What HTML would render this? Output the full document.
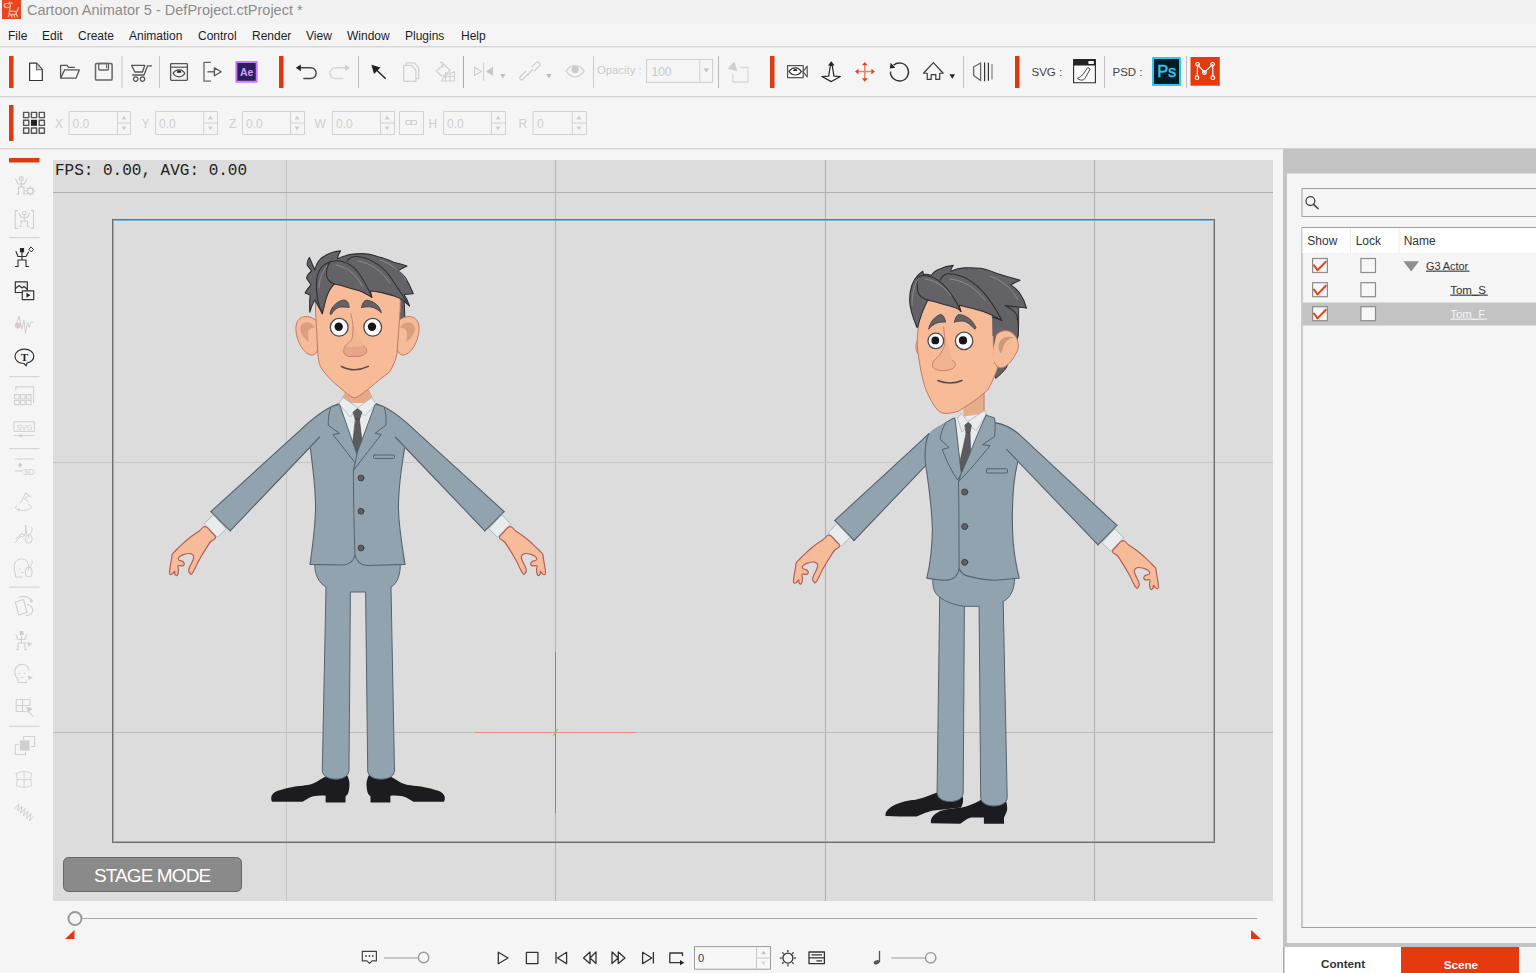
<!DOCTYPE html>
<html><head><meta charset="utf-8">
<style>
html,body{margin:0;padding:0}
body{width:1536px;height:973px;overflow:hidden;background:#f5f5f5;position:relative;font-family:"Liberation Sans",sans-serif}
.a{position:absolute;white-space:pre;line-height:1}
svg{position:absolute;left:0;top:0}
</style></head><body>
<div class="a" style="left:0;top:0;width:1536px;height:24px;background:#f2f2f2"></div>
<svg width="1536" height="973" viewBox="0 0 1536 973">
<!-- separators -->
<rect x="0" y="46" width="1536" height="1" fill="#d4d4d4"/>
<rect x="0" y="47" width="1536" height="1" fill="#e8e8e8"/>
<rect x="0" y="96" width="1536" height="1" fill="#d4d4d4"/>
<rect x="0" y="97" width="1536" height="1" fill="#e8e8e8"/>
<rect x="0" y="148" width="1536" height="1" fill="#d4d4d4"/>
<rect x="0" y="149" width="1536" height="1" fill="#e8e8e8"/>
<!-- logo -->
<rect x="2" y="0" width="19" height="19" fill="#e8461e"/>
<!-- red bars toolbar -->
<rect x="9" y="56" width="4.5" height="32" fill="#dd3a12"/>
<rect x="279" y="56" width="4.5" height="32" fill="#dd3a12"/>
<rect x="770" y="56" width="4.5" height="32" fill="#dd3a12"/>
<rect x="1015" y="56" width="4.5" height="32" fill="#dd3a12"/>
<rect x="9" y="105" width="4.5" height="36" fill="#dd3a12"/>
<rect x="9" y="158" width="30.5" height="4.5" fill="#dd3a12"/>
<!-- canvas -->
<rect x="53" y="160" width="1220" height="741" fill="#dcdcdc"/>
<g>
<rect x="286" y="160" width="1" height="741" fill="#c7c7c7"/>
<rect x="555" y="160" width="1" height="741" fill="#b3b3b3"/>
<rect x="825" y="160" width="1" height="741" fill="#afafaf"/>
<rect x="1094" y="160" width="1" height="741" fill="#afafaf"/>
<rect x="53" y="192" width="1220" height="1" fill="#afafaf"/>
<rect x="53" y="462" width="1220" height="1" fill="#c6c6c6"/>
<rect x="53" y="732" width="1220" height="1" fill="#bcbcbc"/>
</g>
<rect x="112.5" y="219.5" width="1102" height="623" fill="none" stroke="#6e6e6e" stroke-width="1"/>
<rect x="113.5" y="220.5" width="1100" height="621" fill="none" stroke="#7ab6e6" stroke-width="1"/>
<!-- axis -->
<rect x="475" y="732" width="161" height="1" fill="#e88a86"/>
<rect x="555" y="652" width="1" height="161" fill="#7a7ae8"/>
<path d="M553.2,736 L557.8,729.2" stroke="#66e066" stroke-width="1.2"/>
<g id="icons" stroke-linejoin="round">
<!-- logo cat -->
<g fill="none" stroke="#f6b4a2" stroke-width="1.3" stroke-linecap="round">
<ellipse cx="7.3" cy="5.4" rx="3.2" ry="2.1"/>
<path d="M9.3,3.3 L9.3,1.8 M9.5,3.2 L12.3,3.2"/>
<path d="M10,7.3 L9.6,11.5"/>
<ellipse cx="12.8" cy="12.9" rx="3.7" ry="1.8"/>
<path d="M16.3,12 C17.8,10 18.6,9 18.5,7.6"/>
<path d="M9.3,14.3 L8.3,16.6 M11.3,14.6 L11.6,17 M14,14.6 L14.5,17 M16.3,14 L17.3,16.6"/>
</g>
<!-- new doc -->
<path d="M29.6,63.2 L36.7,63.2 L42.3,69.5 L42.3,80.5 L29.6,80.5 Z" fill="#fff" stroke="#333" stroke-width="1.2"/>
<path d="M36.5,63.5 L36.5,69.8 L42,69.8" fill="#ccc" stroke="#666" stroke-width="1.1"/>
<!-- folder -->
<path d="M60.6,78 L60.6,65.3 L67.2,65.3 L68.6,67.3 L74.8,67.3" fill="none" stroke="#555" stroke-width="1.3"/>
<path d="M60.6,78.2 L64.6,69.9 L79.3,69.9 L76,78.2 Z" fill="none" stroke="#555" stroke-width="1.3"/>
<!-- save -->
<rect x="95.5" y="63.5" width="16.6" height="16.6" rx="1.2" fill="none" stroke="#666" stroke-width="1.5"/>
<rect x="98.7" y="63.5" width="9.8" height="6.5" rx="0.8" fill="none" stroke="#666" stroke-width="1.3"/>
<path d="M106.6,64.8 L106.6,68.2" stroke="#666" stroke-width="1.2"/>
<rect x="121.5" y="56" width="1" height="32" fill="#c8c8c8"/>
<!-- cart -->
<path d="M131.6,65.3 L144.8,65.3 L142.5,72 L134.8,72 Z" fill="none" stroke="#555" stroke-width="1.3"/>
<path d="M132.2,75 L144,75 L147.5,65.9 L152,65.9" fill="none" stroke="#555" stroke-width="1.3"/>
<circle cx="135.7" cy="79.1" r="2.2" fill="none" stroke="#555" stroke-width="1.2"/>
<circle cx="142.5" cy="79.1" r="2.2" fill="none" stroke="#555" stroke-width="1.2"/>
<rect x="159" y="56" width="1" height="32" fill="#c8c8c8"/>
<!-- eye window -->
<rect x="170.6" y="63.6" width="16.8" height="16.8" rx="0.8" fill="none" stroke="#555" stroke-width="1.3"/>
<path d="M170.6,67.2 L187.4,67.2" stroke="#555" stroke-width="1.2"/>
<path d="M173.2,73.3 C175,70 177,69.8 179,69.8 C181,69.8 183,70 184.8,73.3 C183,76.5 181,76.8 179,76.8 C177,76.8 175,76.5 173.2,73.3 Z" fill="none" stroke="#444" stroke-width="1.3"/>
<path d="M176.8,72.8 A2.3,2.3 0 0 1 181.4,72.8 Z" fill="#222"/>
<!-- export -->
<path d="M211,62.4 L204,62.4 L204,81.2 L211,81.2" fill="none" stroke="#666" stroke-width="1.3"/>
<path d="M207.4,71.8 L214.2,71.8" stroke="#555" stroke-width="1.3"/>
<path d="M214.4,67.9 L221.2,71.8 L214.4,75.8 Z" fill="none" stroke="#555" stroke-width="1.3"/>
<!-- Ae -->
<rect x="236.3" y="62" width="20.4" height="19.8" fill="#2a1f5a" stroke="#c87cf8" stroke-width="2"/>
<text x="246.6" y="76.3" text-anchor="middle" font-family="Liberation Sans" font-weight="bold" font-size="10.5" fill="#d79cff">Ae</text>
<!-- undo -->
<path d="M300.4,67.8 L310.8,67.8 A5.35,5.35 0 0 1 310.8,78.5 L303.3,78.5" fill="none" stroke="#444" stroke-width="1.4"/>
<path d="M295.9,67.8 L300.8,64.4 L300.8,71.2 Z" fill="#222"/>
<!-- redo -->
<path d="M345.6,67.8 L335.4,67.8 A5.35,5.35 0 0 0 335.4,78.5 L343.4,78.5" fill="none" stroke="#d6d6d6" stroke-width="1.4"/>
<path d="M349.8,67.8 L345.2,64.4 L345.2,71.2 Z" fill="#d0d0d0"/>
<rect x="358" y="56" width="1" height="32" fill="#c0c0c0"/>
<!-- arrow cursor -->
<path d="M371.4,64.8 L380.5,67.4 L374,74 Z" fill="#222"/>
<path d="M376,69.5 L385.7,78.8" stroke="#222" stroke-width="1.4"/>
<!-- copy (light) -->
<path d="M406.2,65 L406.2,62.8 L414.5,62.8 L418.7,68 L418.7,78.7 L416,78.7" fill="none" stroke="#d2d2d2" stroke-width="1.3"/>
<path d="M403.6,65.3 L411.8,65.3 L415.9,70.5 L415.9,81.3 L403.6,81.3 Z" fill="none" stroke="#d2d2d2" stroke-width="1.3"/>
<!-- paint bucket (light) -->
<path d="M440,63 C441.5,61.8 442.8,62.3 442.8,64 L442.6,68" fill="none" stroke="#d2d2d2" stroke-width="1.2"/>
<path d="M438.5,69.5 L443.5,64 L450,70.3 L444.5,75.7 C443,76.5 441.5,76 440.5,75 L436.7,71 C436,70.5 436.5,70 438.5,69.5 Z" fill="none" stroke="#d2d2d2" stroke-width="1.2"/>
<path d="M441.2,81 L446,75 L454.5,71.8 L454.5,81 Z" fill="none" stroke="#d2d2d2" stroke-width="1.2"/>
<path d="M445.5,76.5 L454.5,76.5 M450,72 L450,81 M445.5,72 L445.5,81" stroke="#d2d2d2" stroke-width="1"/>
<rect x="463" y="56" width="1" height="32" fill="#aaaaaa"/>
<!-- flip -->
<path d="M474.6,67.3 L481.4,71.4 L474.6,75.5 Z" fill="none" stroke="#d0d0d0" stroke-width="1.2"/>
<rect x="483.1" y="62.2" width="1" height="18.6" fill="#cfcfcf"/>
<path d="M493,66.8 L485.9,71.4 L493,75.9 Z" fill="#c8c8c8"/>
<path d="M500.2,74 L505.4,74 L502.8,78.5 Z" fill="#bdbdbd"/>
<!-- link -->
<g fill="none" stroke="#d0d0d0" stroke-width="1.3">
<path d="M528.5,73.7 L523,79.2 C522,80.2 521,80.2 520.2,79.4 L520.5,79.4 C519.5,78.5 519.5,77.5 520.5,76.5 L526.2,70.8"/>
<path d="M531.4,67.3 L536.3,62.4 C537,61.7 538,61.7 538.6,62.3 L539.6,63.3 C540.2,64 540.2,65 539.5,65.7 L534,71.2"/>
<path d="M526.8,75.5 L532.8,69.5"/>
</g>
<path d="M546.4,74 L551.6,74 L549,78.5 Z" fill="#bdbdbd"/>
<!-- eye light -->
<path d="M566.2,71.2 C569,66.5 572,65.6 575.1,65.6 C578.2,65.6 581.2,66.5 584,71.2 C581.2,75.9 578.2,76.8 575.1,76.8 C572,76.8 569,75.9 566.2,71.2 Z" fill="none" stroke="#d2d2d2" stroke-width="1.3"/>
<circle cx="575.1" cy="69.6" r="3.6" fill="#cacaca"/>
<rect x="593" y="56" width="1" height="32" fill="#cccccc"/>
<!-- opacity combo -->
<rect x="646.6" y="59.5" width="66" height="22.8" fill="none" stroke="#cdcdcd" stroke-width="1"/>
<rect x="699.3" y="59.5" width="1" height="22.8" fill="#d0d0d0"/>
<path d="M703.5,68.5 L709,68.5 L706.25,72.5 Z" fill="#c4c4c4"/>
<rect x="718" y="56" width="1" height="32" fill="#b8b8b8"/>
<!-- light icon -->
<path d="M734.3,61.5 L727.5,68.7 L737.3,71.3 Z" fill="#cfcfcf"/>
<path d="M740.5,67.5 L748,67.5 L748,82 L732.8,82 L732.8,74.5" fill="none" stroke="#d8d8d8" stroke-width="1.3"/>
<!-- camera eye -->
<rect x="787.6" y="65.6" width="15.6" height="12" fill="#fff" stroke="#555" stroke-width="1.3"/>
<path d="M803,71.6 L807.2,66.2 L807.2,77 Z" fill="none" stroke="#555" stroke-width="1.2"/>
<path d="M789,71.4 C791,68.5 793,67.8 795.2,67.8 C797.4,67.8 799.4,68.5 801.4,71.4 C799.4,74.3 797.4,75 795.2,75 C793,75 791,74.3 789,71.4 Z" fill="none" stroke="#333" stroke-width="1.2"/>
<path d="M793.1,71 A2.1,2.1 0 0 1 797.3,71 Z" fill="#222"/>
<!-- up arrow -->
<path d="M831.3,61.2 L834.6,65.5 L828,65.5 Z" fill="#222"/>
<path d="M830.4,65.5 L828.7,76.2 L821.9,76.5 L831.3,81.6 L840.4,76.5 L833.9,76.2 L832.2,65.5 Z" fill="#fff" stroke="#222" stroke-width="1.2"/>
<!-- move cross -->
<g stroke="#e8836f" stroke-width="1.5"><path d="M864.8,64 L864.8,79.5 M857.5,71.6 L872.5,71.6"/></g>
<g fill="#e04428">
<path d="M864.8,61.9 L867.6,65.3 L862,65.3 Z"/><path d="M864.8,81.7 L867.6,78.3 L862,78.3 Z"/>
<path d="M855,71.6 L858.5,68.8 L858.5,74.4 Z"/><path d="M874.9,71.6 L871.4,68.8 L871.4,74.4 Z"/>
</g>
<!-- rotate -->
<path d="M890.5,71.5 A9,9 0 1 0 893.5,65.3" fill="none" stroke="#333" stroke-width="1.4"/>
<path d="M889.9,68.4 L890.6,62.8 L895.3,67.8 Z" fill="#222"/>
<!-- house -->
<path d="M923.5,73.25 L933.4,62.7 L943.2,73.25 L939.7,73.25 L939.7,79.4 L935.8,79.4 L935.8,74.7 L931.2,74.7 L931.2,79.4 L927.2,79.4 L927.2,73.25 Z" fill="none" stroke="#3a3a3a" stroke-width="1.2"/>
<path d="M949.5,74.2 L955,74.2 L952.25,78.8 Z" fill="#222"/>
<rect x="963" y="56" width="1" height="32" fill="#c0c0c0"/>
<!-- lines icon -->
<path d="M980.6,63 L973.6,67 L973.6,75.5 L980.6,80.5 Z" fill="none" stroke="#666" stroke-width="1.3"/>
<path d="M984.6,62.5 L984.6,81.2 M988.4,62.8 L988.4,80.8" stroke="#333" stroke-width="1.2"/>
<path d="M992,64 L992,79.5" stroke="#888" stroke-width="1.3"/>
<!-- svg icon -->
<rect x="1073.6" y="59.6" width="21.8" height="23.2" fill="#fbfbfb" stroke="#2a2a2a" stroke-width="1.1"/>
<rect x="1073.6" y="59.6" width="21.8" height="5.9" fill="#232323"/>
<rect x="1088.3" y="61" width="5.6" height="3.1" rx="0.8" fill="#f4f4f4"/>
<path d="M1087.8,67.5 L1090.2,69 L1085.5,77.5 C1085,79.5 1082.5,80.5 1080.5,80 L1077.2,78.5 C1079.5,77.5 1081.5,76 1083,74.5 Z" fill="none" stroke="#333" stroke-width="0.9"/>
<rect x="1104" y="56" width="1" height="32" fill="#c0c0c0"/>
<!-- PS -->
<rect x="1153" y="58" width="27" height="27" fill="#001d26" stroke="#31c5f4" stroke-width="2"/>
<text x="1166.6" y="77" text-anchor="middle" font-family="Liberation Sans" font-size="16.5" fill="#31c5f4" stroke="#31c5f4" stroke-width="0.45" letter-spacing="-0.3">Ps</text>
<rect x="1186" y="56" width="1" height="32" fill="#c0c0c0"/>
<!-- M -->
<rect x="1190.5" y="57" width="29.25" height="28.7" fill="#e5390e"/>
<g fill="none" stroke="#fff" stroke-width="1.2">
<path d="M1197.2,76.2 L1197.6,65.8 M1197.6,64.3 L1204.45,72.5 L1212.6,64.3 M1212.7,65.8 L1212.9,76.2"/>
<circle cx="1197.6" cy="64.3" r="1.8"/><circle cx="1212.6" cy="64.3" r="1.8"/><circle cx="1204.45" cy="72.5" r="1.8"/>
<circle cx="1197" cy="77.7" r="1.8"/><circle cx="1212.9" cy="77.7" r="1.8"/>
</g>
<!-- toolbar 2: grid icon -->
<g fill="none" stroke="#555" stroke-width="1.4">
<rect x="23.6" y="112.4" width="5.2" height="5.2"/><rect x="31.4" y="112.4" width="5.2" height="5.2"/><rect x="39.2" y="112.4" width="5.2" height="5.2"/>
<rect x="23.6" y="120.2" width="5.2" height="5.2"/><rect x="39.2" y="120.2" width="5.2" height="5.2"/>
<rect x="23.6" y="128" width="5.2" height="5.2"/><rect x="31.4" y="128" width="5.2" height="5.2"/><rect x="39.2" y="128" width="5.2" height="5.2"/>
</g>
<rect x="31" y="119.8" width="6" height="6" fill="#222"/>
<!-- spin boxes -->
<g fill="none" stroke="#d2d2d2" stroke-width="1">
<rect x="69" y="111.5" width="61.5" height="23"/><path d="M117.5,111.5 L117.5,134.5 M117.5,123 L130.5,123"/>
<rect x="155.5" y="111.5" width="62" height="23"/><path d="M203.8,111.5 L203.8,134.5 M203.8,123 L217.5,123"/>
<rect x="242.5" y="111.5" width="62" height="23"/><path d="M290.5,111.5 L290.5,134.5 M290.5,123 L304.5,123"/>
<rect x="332.5" y="111.5" width="62" height="23"/><path d="M380.5,111.5 L380.5,134.5 M380.5,123 L394.5,123"/>
<rect x="399.5" y="111.5" width="24" height="23"/>
<rect x="443.5" y="111.5" width="62" height="23"/><path d="M491.5,111.5 L491.5,134.5 M491.5,123 L505.5,123"/>
<rect x="533" y="111.5" width="53.5" height="23"/><path d="M572.3,111.5 L572.3,134.5 M572.3,123 L586.5,123"/>
</g>
<g fill="#cfcfcf">
<path d="M121.6,119.5 L126.4,119.5 L124,115.6 Z M121.6,126.5 L126.4,126.5 L124,130.4 Z"/>
<path d="M208,119.5 L212.8,119.5 L210.4,115.6 Z M208,126.5 L212.8,126.5 L210.4,130.4 Z"/>
<path d="M294.7,119.5 L299.5,119.5 L297.1,115.6 Z M294.7,126.5 L299.5,126.5 L297.1,130.4 Z"/>
<path d="M384.7,119.5 L389.5,119.5 L387.1,115.6 Z M384.7,126.5 L389.5,126.5 L387.1,130.4 Z"/>
<path d="M495.7,119.5 L500.5,119.5 L498.1,115.6 Z M495.7,126.5 L500.5,126.5 L498.1,130.4 Z"/>
<path d="M576.6,119.5 L581.4,119.5 L579,115.6 Z M576.6,126.5 L581.4,126.5 L579,130.4 Z"/>
</g>
<g fill="none" stroke="#d0d0d0" stroke-width="1.2">
<rect x="406" y="120.5" width="5" height="4" rx="1"/><rect x="411.5" y="120.5" width="5" height="4" rx="1"/>
</g>
</g>

<g id="sidebar" fill="none" stroke-linecap="round" stroke-linejoin="round">
<g fill="#d6d6d6">
<rect x="9" y="237" width="30.5" height="1.2"/>
<rect x="9" y="376" width="30.5" height="1.2"/>
<rect x="9" y="448" width="30.5" height="1.2"/>
<rect x="9" y="586.5" width="30.5" height="1.2"/>
<rect x="9" y="725.7" width="30.5" height="1.2"/>
</g>
<!-- 1 figure + gear -->
<g stroke="#cdcdcd" stroke-width="1.1">
<circle cx="21.3" cy="178.8" r="1.9"/>
<path d="M15.5,179 L18,184 L24.5,184 L27,179 M21.3,180.7 L21.3,186.5 M16.5,194 L18.5,194 L18.5,187 L24,187 L24,194 L26,194"/>
<circle cx="30.3" cy="190.9" r="2.8"/>
<path d="M30.3,186.5 L30.3,187.5 M30.3,194.3 L30.3,195.3 M25.9,190.9 L26.9,190.9 M33.7,190.9 L34.7,190.9 M27.2,187.8 L27.9,188.5 M32.7,193.3 L33.4,194 M27.2,194 L27.9,193.3 M32.7,188.5 L33.4,187.8"/>
</g>
<!-- 2 figure brackets -->
<g stroke="#d0d0d0" stroke-width="1.1">
<path d="M17.5,210.6 L15.2,210.6 L15.2,228.4 L17.5,228.4 M31.2,210.6 L33.5,210.6 L33.5,228.4 L31.2,228.4"/>
<circle cx="24.3" cy="213" r="1.8"/>
<path d="M19,213 L21,217.5 L27.5,217.5 L29.5,213 M24.3,214.8 L24.3,220 M19.5,226.5 L21,226.5 L21,221 L27.5,221 L27.5,226.5 L29,226.5"/>
</g>
<!-- 3 dark figure sparkle -->
<g stroke="#2c2c2c" stroke-width="1.1">
<path d="M16,251.5 L18,256.5 L26,256.5 L28.5,252 M22,252 L22,259.5 M15.5,266.5 L18,266.5 L18,260 L26,260 L26,266.5 L28.5,266.5"/>
<path d="M31.3,247.2 L33.5,249.6 L31.3,252 L29.1,249.6 Z" stroke-width="1"/>
</g>
<rect x="19.9" y="248" width="4.2" height="4.3" fill="#2a2a2a"/>
<!-- 4 image + video -->
<g stroke="#333" stroke-width="1.2">
<path d="M22,292.5 L15.3,292.5 L15.3,281.8 L27.3,281.8 L27.3,290.6"/>
<path d="M15.5,288.5 L19,285.5 L22,288 L24,286.5 L27,289"/>
<rect x="22.3" y="290.8" width="11.4" height="8.8"/>
</g>
<path d="M26.5,292.7 L30.3,295.2 L26.5,297.7 Z" fill="#222"/>
<!-- 5 audio -->
<circle cx="17.8" cy="325.4" r="3" fill="#e8c4c8"/>
<path d="M16,326 L19,316 L22,329 L24,320 L25.5,333.5 L27.5,322 L29,327 L31,322 L33.5,322" stroke="#cfcfcf" stroke-width="1"/>
<!-- 6 T bubble -->
<path d="M24.4,349.2 C30,349.2 33.8,352.3 33.8,356.3 C33.8,359.5 31,362 27,363 L26.2,365.8 L24,363.5 C18.5,363.5 15,360.5 15,356.3 C15,352.3 19,349.2 24.4,349.2 Z" stroke="#333" stroke-width="1.2"/>
<text x="24.4" y="360.5" text-anchor="middle" font-family="Liberation Serif" font-weight="bold" font-size="11" fill="#222" stroke="none">T</text>
<!-- 7 grid -->
<g stroke="#d2d2d2" stroke-width="1.1">
<path d="M15.8,390 L15.8,386.9 L33.6,386.9 L33.6,402.5"/>
<rect x="14.5" y="394.6" width="4.6" height="4.2"/><rect x="20.5" y="394.6" width="4.6" height="4.2"/><rect x="26.5" y="394.6" width="4.6" height="4.2"/>
<rect x="14.5" y="400.4" width="4.6" height="4.2"/><rect x="20.5" y="400.4" width="4.6" height="4.2"/><rect x="26.5" y="400.4" width="4.6" height="4.2"/>
</g>
<!-- 8 svg -->
<rect x="14.4" y="421.8" width="20" height="9.6" stroke="#d0d0d0" stroke-width="1"/>
<text x="24.4" y="429.6" text-anchor="middle" font-family="Liberation Sans" font-size="7.5" fill="#cfcfcf" stroke="none">SVG</text>
<path d="M14.4,435.6 L34.4,435.6" stroke="#d0d0d0" stroke-width="1"/>
<circle cx="20.8" cy="435.6" r="1.6" fill="#cfcfcf"/>
<!-- 9 3D -->
<path d="M15.6,459 L33.6,459 M15.6,470.9 L22.5,470.9" stroke="#d2d2d2" stroke-width="1.1"/>
<path d="M20.2,462.6 L22.6,465 L20.2,467.4 L17.8,465 Z" fill="#cfcfcf"/>
<text x="23" y="474.6" font-family="Liberation Sans" font-size="9" fill="#d0d0d0" stroke="none">3D</text>
<!-- 10 -->
<g stroke="#d0d0d0" stroke-width="1">
<path d="M20.5,503 L26,492.5 L29,495.5 L24.5,498.5 L28.5,502"/><path d="M27,494 L31,497"/>
<path d="M17,505.5 C14,507 14.5,509 19,510 M22,510.5 C27,510.5 31.5,509 31.5,507 C31.5,505.5 30,505 28.5,504.8"/>
<path d="M18.5,508.5 L20.2,510.2 L18,511"/>
</g>
<!-- 11 -->
<g stroke="#d0d0d0" stroke-width="1">
<path d="M14.5,543 L21,536 L22.5,537.5 L27,532"/><path d="M16,539 L22,533.5 L24,535"/>
<path d="M25.8,525.5 L25.8,534" stroke-width="1.6"/>
<rect x="25.5" y="534.5" width="6.5" height="8.5" rx="3.2"/><path d="M28.7,534.5 L28.7,538 M30.5,534 C32,531 33,529 31.5,527"/>
</g>
<!-- 12 face + mouse -->
<g stroke="#d0d0d0" stroke-width="1">
<path d="M22,577 L15.5,577 L15.5,574 C13.5,571 14,565 15,563 C17,559 21,558.5 24.5,559.5 C27,560.5 28.5,563 28.5,566"/>
<path d="M19.5,569 L20.5,569 M21.5,572.5 L23.5,572.5"/>
<rect x="25.5" y="567" width="6.5" height="10" rx="3.2"/><path d="M28.7,567 L28.7,570.5 M30.5,566.5 C32,564 33,562 31.5,560"/>
</g>
<!-- 13 page rotate -->
<g stroke="#d0d0d0" stroke-width="1.1">
<path d="M15.3,602 L23.5,599.5 L27,612.5 L18.7,615 Z"/>
<path d="M19,597 C24,595.5 29,597 32,601 M27.5,604.5 C31,605.5 33,608 32.5,611 C32,614 29,615.5 26,615.5"/>
</g>
<path d="M33.2,601.5 L29.5,602.5 L31.5,598.5 Z" fill="#cfcfcf"/>
<!-- 14 figure cursor -->
<g stroke="#d0d0d0" stroke-width="1.1">
<path d="M16,634.5 L18,639.5 L25,639.5 L27,634.5 M21.5,636 L21.5,642.5 M16.5,649.5 L18,649.5 L18,643 L25,643 L25,649.5 L26.5,649.5"/>
</g>
<rect x="19.7" y="631" width="3.8" height="4" fill="#cccccc"/>
<path d="M27,642 L32,643.5 L28.5,646.5 Z" fill="#cfcfcf"/>
<!-- 15 head cursor -->
<g stroke="#d0d0d0" stroke-width="1.1">
<path d="M18,682.5 L18,679 C15.5,677 14.5,673 15,670 C16,665.5 20,663.8 23.5,664.5 C26.5,665 28.5,667.5 29,670.5 M26.5,681.5 L26.5,682.5 L18,682.5"/>
<path d="M19,673.5 L20,673.5 M24,673.5 L25,673.5 M21,677.5 L23,677.5"/>
</g>
<path d="M27.5,675.5 L33,677.5 L28.5,680 Z" fill="#cfcfcf"/>
<!-- 16 grid cursor -->
<g stroke="#d2d2d2" stroke-width="1.1">
<path d="M16.2,699.5 L30,699.5 M16.2,705.5 L30,705.5 M16.2,711.5 L26,711.5 M16.2,699.5 L16.2,711.5 M22.5,699.5 L22.5,711.5 M30,699.5 L30,705"/>
<path d="M28,711 L33,716.5"/>
</g>
<path d="M26,706.5 L32.5,708.5 L28,713 Z" fill="#cfcfcf"/>
<!-- 17 overlapped squares -->
<rect x="19.9" y="740.4" width="9.6" height="10.2" fill="#d0d0d0"/>
<path d="M23.5,740 L23.5,736.5 L34.6,736.5 L34.6,746.5 L31.5,746.5 M25.5,752.5 L25.5,754.5 L15.3,754.5 L15.3,744.5 L18.5,744.5" stroke="#d2d2d2" stroke-width="1.1"/>
<!-- 18 warp -->
<g stroke="#d4d4d4" stroke-width="1">
<path d="M16.2,773.5 C20,772 22,771.5 24,771.5 C26,771.5 28,772 31.8,773.5 C30.5,777 30.5,781 31.8,785.5 C28,787 26,787.5 24,787.5 C22,787.5 20,787 16.2,785.5 C17.5,781 17.5,777 16.2,773.5 Z"/>
<path d="M24,771.5 L24,787.5 M17,779.5 L31,779.5"/>
</g>
<!-- 19 spring -->
<path d="M15,808.5 L19,803.8 L17.5,811 L22,806 L20.5,813.5 L25,808.5 L23.5,816 L28,811 L26.5,818.5 L31,813.5 L29.5,821 L34,816" stroke="#d0d0d0" stroke-width="1"/>
</g>

<g id="char1" stroke-linejoin="round" stroke-linecap="round">
<!-- shoes -->
<path d="M272,801.8 C271,799.5 271,797.5 271.5,796 C273,792.5 276.5,791 280.6,790 C287,788 294,786.5 299.4,786 C304,785.5 307,785.2 310.3,784.5 C316,782.5 320,779.5 325.2,776.7 L330,772 L345,772 C348,776 350,781 349.4,786 C349.2,790 348.5,792.5 347.8,794 L345.5,796.5 L345.5,802.6 L325.6,802.6 L325.6,795.7 C321,795.5 317,795.6 313.4,796.3 C309,797.5 306,800 302.5,801.8 Z" fill="#1c1c20"/>
<path d="M 444,801.8 C 445,799.5 445,797.5 444.5,796 C 443,792.5 439.5,791 435.4,790 C 429,788 422,786.5 416.6,786 C 412,785.5 409,785.2 405.7,784.5 C 400,782.5 396,779.5 390.8,776.7 L 386,772 L 371,772 C 368,776 366,781 366.6,786 C 366.8,790 367.5,792.5 368.2,794 L 370.5,796.5 L 370.5,802.6 L 390.4,802.6 L 390.4,795.7 C 395,795.5 399,795.6 402.6,796.3 C 407,797.5 410,800 413.5,801.8 Z" fill="#1c1c20"/>
<!-- pants -->
<path d="M315,548 L400,548 L400,560 C401.5,574 397,584 391,587 L394.5,770 C394.5,776 389,779.2 381,779.2 C373,779.2 367.7,776 367.7,770 L365.6,592 L350.4,592 L349,770 C349,776 343,779.2 336,779.2 C328,779.2 322.3,776 322.3,770 L326,587 C319,583 313.5,574 315,560 L315,548 Z" fill="#91a3ae" stroke="#56636d" stroke-width="1"/>
<!-- jacket body fill -->
<path d="M339,403.6 L330.8,407.2 L315,418 L310.4,448.5 C313,470 316,490 315.5,510 C315,530 312,550 310,564.4 L344,565 C350,564 354,560 355,555 C356,560 360,565.5 368,565.5 L405,564.4 C403,550 399,530 398.5,510 C398,490 401,470 404.6,448.5 L400,418 L384.2,407.2 L376,403.6 Z" fill="#91a3ae"/>
<!-- arms fill -->
<path d="M210.9,511.6 L300,430.3 C310,421 320,412 331,407 L340,420 L330,452 L311,447 L230.2,530.8 Z" fill="#91a3ae"/>
<path d="M504.1,511.6 L415,430.3 C405,421 395,412 384,407 L375,420 L385,452 L404,447 L484.8,530.8 Z" fill="#91a3ae"/>
<g fill="none" stroke="#56636d" stroke-width="1.1">
<path d="M210.9,511.6 L300,430.3 C310,421 320,412 331,407 L339,403.6"/>
<path d="M230.2,530.8 L319.7,437"/>
<path d="M210.9,511.6 L230.2,530.8"/>
<path d="M504.1,511.6 L415,430.3 C405,421 395,412 384,407 L376,403.6"/>
<path d="M484.8,530.8 L395.3,437"/>
<path d="M504.1,511.6 L484.8,530.8"/>
<path d="M310.4,448.5 C313,470 316,490 315.5,510 C315,530 312,550 310,564.4 L344,565 C350,564 354,560 355,555 C356,560 360,565.5 368,565.5 L405,564.4 C403,550 399,530 398.5,510 C398,490 401,470 404.6,448.5"/>
</g>
<!-- cuffs -->
<path d="M212.8,515 L204.3,523.9 L217.4,537.4 L225.9,528.9 Z" fill="#e9ecec" stroke="#a9b8c0" stroke-width="1"/>
<path d="M502.2,515 L510.7,523.9 L497.6,537.4 L489.1,528.9 Z" fill="#e9ecec" stroke="#a9b8c0" stroke-width="1"/>
<!-- hands -->
<path d="M205.09,526.59 C202.01,526.40 203.16,528.13 198.92,531.21 C194.68,534.30 192.95,535.07 188.13,538.92 C183.31,542.78 182.93,543.55 179.65,546.63 C176.37,549.72 176.85,549.33 175.02,551.26 C173.19,553.19 173.19,552.42 172.32,554.34 C171.46,556.27 172.23,554.92 171.55,558.97 C170.88,563.02 170.01,566.68 169.63,570.54 C169.24,574.39 169.24,573.62 170.01,574.39 C170.78,575.16 171.55,574.39 172.71,573.62 C173.87,572.85 174.06,571.11 174.64,571.31 C175.22,571.50 174.35,573.43 175.02,574.39 C175.70,575.35 176.47,576.13 177.34,575.16 C178.20,574.20 178.30,572.85 178.49,570.54 C178.69,568.22 177.43,567.07 178.11,565.91 C178.78,564.75 179.75,566.10 181.19,565.91 C182.64,565.72 183.31,566.10 183.89,565.14 C184.47,564.18 184.85,563.40 183.50,562.05 C182.15,560.71 179.46,561.09 178.49,559.74 C177.53,558.39 178.20,558.01 179.65,556.66 C181.09,555.31 181.58,555.12 184.28,554.34 C186.97,553.57 188.13,553.19 190.44,553.57 C192.76,553.96 192.95,554.15 193.53,555.89 C194.11,557.62 193.91,557.24 192.76,560.51 C191.60,563.79 189.67,565.91 188.90,568.99 C188.13,572.08 188.90,571.69 189.67,572.85 C190.44,574.01 190.44,575.16 191.99,573.62 C193.53,572.08 193.91,570.34 195.84,566.68 C197.77,563.02 196.61,564.37 199.70,558.97 C202.78,553.57 205.29,549.53 208.18,545.09 C211.07,540.66 209.43,543.16 211.26,541.24 C213.09,539.31 215.50,539.70 215.50,537.38 C215.50,535.07 213.86,534.68 211.26,531.99 C208.66,529.29 208.18,526.78 205.09,526.59 Z" fill="#f6bb98" stroke="#b0605a" stroke-width="1.2"/>
<path d="M509.91,526.59 C512.99,526.40 511.84,528.13 516.08,531.21 C520.32,534.30 522.05,535.07 526.87,538.92 C531.69,542.78 532.07,543.55 535.35,546.63 C538.63,549.72 538.15,549.33 539.98,551.26 C541.81,553.19 541.81,552.42 542.68,554.34 C543.54,556.27 542.77,554.92 543.45,558.97 C544.12,563.02 544.99,566.68 545.37,570.54 C545.76,574.39 545.76,573.62 544.99,574.39 C544.22,575.16 543.45,574.39 542.29,573.62 C541.13,572.85 540.94,571.11 540.36,571.31 C539.78,571.50 540.65,573.43 539.98,574.39 C539.30,575.35 538.53,576.13 537.66,575.16 C536.80,574.20 536.70,572.85 536.51,570.54 C536.31,568.22 537.57,567.07 536.89,565.91 C536.22,564.75 535.25,566.10 533.81,565.91 C532.36,565.72 531.69,566.10 531.11,565.14 C530.53,564.18 530.15,563.40 531.50,562.05 C532.85,560.71 535.54,561.09 536.51,559.74 C537.47,558.39 536.80,558.01 535.35,556.66 C533.91,555.31 533.42,555.12 530.72,554.34 C528.03,553.57 526.87,553.19 524.56,553.57 C522.24,553.96 522.05,554.15 521.47,555.89 C520.89,557.62 521.09,557.24 522.24,560.51 C523.40,563.79 525.33,565.91 526.10,568.99 C526.87,572.08 526.10,571.69 525.33,572.85 C524.56,574.01 524.56,575.16 523.01,573.62 C521.47,572.08 521.09,570.34 519.16,566.68 C517.23,563.02 518.39,564.37 515.30,558.97 C512.22,553.57 509.71,549.53 506.82,545.09 C503.93,540.66 505.57,543.16 503.74,541.24 C501.91,539.31 499.50,539.70 499.50,537.38 C499.50,535.07 501.14,534.68 503.74,531.99 C506.34,529.29 506.82,526.78 509.91,526.59 Z" fill="#f6bb98" stroke="#b0605a" stroke-width="1.2"/>
<!-- neck -->
<path d="M348,386 L367,386 L373,398 L357.5,409 L342,398 Z" fill="#e8a988"/>
<!-- shirt -->
<path d="M339.6,403 L375,403 L357,462 Z" fill="#e9ecec"/>
<path d="M343.2,397.5 L357.5,407.7 L372,397.5 L376,404 L364.7,416 L357.5,409 L350.3,417 L339,404 Z" fill="#e9ecec" stroke="#a9b8c0" stroke-width="0.8"/>
<!-- tie -->
<path d="M355.7,418.5 L359.3,418.5 L361.5,437 L362.6,446 L357.5,458.5 L352.2,446 L353.4,437 Z" fill="#5b5b5f" stroke="#3a3a3e" stroke-width="0.6"/>
<path d="M353.2,412 L357.5,408.6 L361.9,412 L359.6,419.2 L355.4,419.2 Z" fill="#5b5b5f" stroke="#3a3a3e" stroke-width="0.6"/>
<!-- lapels -->
<path d="M330.8,407 C328.5,414 328,420 328.3,425.2 L339.6,433.4 L332.9,434.5 L355.5,463.2 C355,466 354,468 353.4,470.4 L357.5,456 L339.6,404.7 Z" fill="#91a3ae" stroke="#56636d" stroke-width="1"/>
<path d="M384.2,407 C386.5,414 386,420 385.8,425.2 L375,433.4 L381.2,434.5 L353.4,470.4 L357.5,452 L375,404.7 Z" fill="#91a3ae" stroke="#56636d" stroke-width="1"/>
<path d="M353.4,470.4 C353.5,500 354,530 355,555" fill="none" stroke="#56636d" stroke-width="1"/>
<!-- buttons & pocket -->
<g fill="#5d5f63" stroke="#333" stroke-width="0.7">
<circle cx="361" cy="478" r="3"/><circle cx="361" cy="511.3" r="3"/><circle cx="361" cy="548" r="3"/>
</g>
<rect x="373.5" y="455" width="21" height="3.5" rx="1" fill="#91a3ae" stroke="#56636d" stroke-width="1"/>
<!-- hair back (behind face) -->
<path d="M396,296 L404,296 L405,322 L396,322 Z" fill="#636367" stroke="#2e2e32" stroke-width="1"/>
<!-- ears -->
<path d="M317,321 C306,312 294.5,317 296,331 C297.5,344 305,355 312,355 C316,355 318.5,350 318.5,345 Z" fill="#f6bb98" stroke="#c07868" stroke-width="1"/>
<path d="M398,321 C409,312 420.5,317 419,331 C417.5,344 410,355 403,355 C399,355 396.5,350 396.5,345 Z" fill="#f6bb98" stroke="#c07868" stroke-width="1"/>
<path d="M300,327 C303,320 312,321 315,328 C310,327 306,330 309,342 C303,338 300,333 300,327 Z" fill="#d9a080"/>
<path d="M415,327 C412,320 403,321 400,328 C405,327 409,330 406,342 C412,338 415,333 415,327 Z" fill="#d9a080"/>
<!-- face -->
<path d="M315.3,282 L315.55,310 L317.9,354.4 C318.5,362 320,366 322,369.2 C328,377 332,381 337.75,385.9 C344,391 350,397 354.4,397.9 C359,397 364,392 369.2,388.6 C376,382 383,377 389.55,372 C393,366 396,360 397,353.5 L400.2,310 L400.5,282 Z" fill="#f7bb98" stroke="#c07868" stroke-width="1"/>
<!-- hair -->
<path d="M322.3,313.75 L325.8,299.7 C328,292 331,287 334.4,284 C339,285 343,286 346.9,287.2 C352,289 357,290 362.5,291.9 L371.9,297.3 L370.3,291 C373,291 375,291.5 378.1,291.9 C384,293 389,294.5 393.75,295.8 C397,297 400,298 402.3,299.7 L409.4,305.9 C408,301 406,297 404,294.5 L413.3,293.8 C411,288 408,282 405.5,277.8 C403,275 400,272 397.7,270.8 L407,266.1 C401,264 397,263 393.75,262.2 C388,259.5 383,257.5 378.1,256.7 C372,254.5 367,253.6 362.5,253.6 C357,253.6 354,254 350.8,254.4 C346,255.5 341,257 337.5,258.7 C338,255 339,253 340.6,250.9 C336,251 334,252 331.25,252.8 C327,254.5 324,256 321.1,258.3 C318,261 316,265 314.8,270 L309.4,257.5 C307.5,260 307,263 307.4,265.3 L311.7,270.8 C309,273 307,276 306.6,278.2 L310.9,284.8 C308,288 306,291 305.1,293 L310.2,295 C309.5,300 309.5,306 309.8,312.2 C311,307 313,303 314.8,300 C317,304 320,309 322.3,313.75 Z" fill="#636367" stroke="#2e2e32" stroke-width="1.1"/>
<g fill="none" stroke="#2e2e32" stroke-width="1.05">
<path d="M322.3,313.75 C318,305 316,292 316.5,282 C317,272 322,264 331.25,261.4"/>
<path d="M334.4,284 C329,282 326,278 326.5,272 C327,265 330,262 331.25,261.4 C340,259.5 352,262 360.9,276.25 C365,283 369,290 371.9,297.3"/>
<path d="M347,261 C350,257.5 353,256.5 356,256.6 C368,257 382,265 389.8,276.25 C396,285 402,295 409.4,305.9"/>
</g>
<g fill="none" stroke="#8e8e92" stroke-width="0.9">
<path d="M336,265 C347,267 356,274 362,286"/>
<path d="M358,261 C370,263 381,270 390,283"/>
<path d="M380,260 C392,264 400,271 406,280"/>
<path d="M319,288 C319,280 322,272 327,266"/>
</g>
<!-- eyebrows -->
<path d="M330,313.5 C331,307 337,301 343.75,300 C347,300 349,303 349.2,307.5 C346,307 342,306.8 339,307.2 C336,308.5 333,311 331.25,314.5 Z" fill="#636367" stroke="#3c3c40" stroke-width="0.8"/>
<path d="M361.7,307.5 C362,303.5 364,300.2 367,300.2 C374,301 380,306 381.3,312.8 C379,310.5 375,307.5 371,307 C368,306.7 365,306.8 361.7,307.5 Z" fill="#636367" stroke="#3c3c40" stroke-width="0.8"/>
<!-- nose -->
<path d="M353,326 C356,332 361,340 363.65,345.6 C366.5,347.5 367.2,350 366.4,352.8 C364,355.5 361,356.5 358.1,356.5 L348.85,356.5 C345.5,355.5 343.5,354 343.6,351.5 C344,348.5 345,347 346,346 C349,343 351.5,340.5 352,338 Z" fill="#f2b592"/>
<path d="M345.5,346.5 C344,348.5 343.5,351 343.8,352.8 C345,355.5 347,356.5 348.85,356.5 L358.1,356.5 C361,356.5 364,355.5 366.4,352.8 C367.2,350 366.5,347.5 363.65,345.6 C360,347 352,347 345.5,346.5 Z" fill="#e6a687"/>
<path d="M350.7,313.7 C352,318 353,323 353,328.5 C353,333 352.5,337 351.6,339.6 C349,343 346,345 345.2,346 C344,348 343.5,350 343.8,352.55 C345,355 347,356.4 348.85,356.4 L358.1,356.4 C361,356.4 364,355 366.4,352.55 C367,350 366.5,348 363.65,345.6" fill="none" stroke="#c98272" stroke-width="1"/>
<!-- eyes -->
<g stroke="#4a4a4e" stroke-width="1.3" fill="#fff">
<circle cx="339.2" cy="327.3" r="8.9"/><circle cx="372.7" cy="327.3" r="8.9"/>
</g>
<circle cx="338.7" cy="326.7" r="4.2" fill="#16161a"/><circle cx="372" cy="326.7" r="4.2" fill="#16161a"/>
<!-- mouth -->
<path d="M341.45,366.4 C346,368.5 350,369.7 354.4,369.7 C359,369.7 364,368.5 368.3,366.4" fill="none" stroke="#5e4a46" stroke-width="1.6"/>
</g>

<g id="char2" stroke-linejoin="round" stroke-linecap="round">
<!-- shoes -->
<path d="M936.5,792.8 C925,797 918,800 911.9,800.1 C898,802 886,808 885.5,814.7 L885.5,816 C895,816.5 905,816.5 916.5,816.5 C925,813 932,810 939.2,810.1 L961.1,807.4 C963.5,803 963.5,799 962.5,796.4 Z" fill="#1c1c20"/>
<path d="M980.7,800.1 C972,805 966,807 962,807.4 C955,808 945,809 940.2,811 C934,814 930,818 931,823.3 L960.2,823.8 C965,820 968,818 971.1,817.4 L983.9,817.4 L983.9,823.8 L1004,823.8 L1004,817.4 C1006.5,813 1007.5,810 1007.2,808.3 C1007,805 1006.8,803 1006.2,801.9 Z" fill="#1c1c20"/>
<!-- pants -->
<path d="M933,566 L933,578 C932,588 935,594 939.7,597 L937.1,792 C937,799 944,801.5 950,801.5 C957,801.5 963.2,799 963.2,792 L964.4,606.3 L979.1,606.3 L980.7,797.5 C980.7,803 987,806 994,806 C1001,806 1007.2,803 1007.2,797.5 L1003.2,601.6 C1010,598 1014.6,590 1014.6,578 L1014.6,566 Z" fill="#91a3ae" stroke="#56636d" stroke-width="1"/>
<path d="M939.7,597 C945,602 955,605 964.4,606.3" fill="none" stroke="#56636d" stroke-width="1"/>
<!-- left arm (behind body) -->
<path d="M834.8,520.4 L915,446.6 C920,442 925,437 928.9,433.7 L936,440 L936,470 L927,464.2 L854,540.5 Z" fill="#91a3ae"/>
<g fill="none" stroke="#56636d" stroke-width="1.1">
<path d="M834.8,520.4 L915,446.6 C920,442 925,437 928.9,433.7"/>
<path d="M854,540.5 L927,464.2"/>
<path d="M834.8,520.4 L854,540.5"/>
</g>
<!-- jacket body -->
<path d="M953.9,418 L945.5,422.6 C938,426 932,430 928.9,433.7 C925.5,440 924.8,452 925.2,462 C928,480 932,510 932.4,530 C932,550 930,565 926.8,578.2 C935,579.5 940,580.2 944.4,580.2 C950,580 954,578 955.1,576.9 C957.5,574 959,571 959.1,568.8 C961,573 965,576 971.1,576.9 C980,579 990,580.2 995.2,580.2 L1019.2,578.2 C1016,565 1013,550 1012.55,530 C1012,510 1013,480 1017.7,462.4 L1019.55,434.6 C1012,428 1004,424 994.6,422.6 L994.6,418 L986.2,415.2 Z" fill="#91a3ae"/>
<path d="M928.9,433.7 C925.5,440 924.8,452 925.2,462 C928,480 932,510 932.4,530 C932,550 930,565 926.8,578.2 C935,579.5 940,580.2 944.4,580.2 C950,580 954,578 955.1,576.9 C957.5,574 959,571 959.1,568.8 C961,573 965,576 971.1,576.9 C980,579 990,580.2 995.2,580.2 L1019.2,578.2 C1016,565 1013,550 1012.55,530 C1012,510 1013,480 1017.7,462.4" fill="none" stroke="#56636d" stroke-width="1.1"/>
<!-- right arm -->
<path d="M1116.9,525.4 L1019.55,434.6 C1012,428 1004,424 994.6,422.6 L990,440 L1000,465 L1006.6,449.4 L1098,544.9 Z" fill="#91a3ae"/>
<g fill="none" stroke="#56636d" stroke-width="1.1">
<path d="M1116.9,525.4 L1019.55,434.6 C1012,428 1004,424 994.6,422.6"/>
<path d="M1098,544.9 L1006.6,449.4"/>
<path d="M1116.9,525.4 L1098,544.9"/>
</g>
<!-- cuffs -->
<path d="M836.7,523.8 L828.2,532.7 L841.3,546.2 L849.8,537.7 Z" fill="#e9ecec" stroke="#a9b8c0" stroke-width="1"/>
<path d="M1115.2,529 L1123.7,537.9 L1110.6,551.4 L1102.1,542.9 Z" fill="#e9ecec" stroke="#a9b8c0" stroke-width="1"/>
<!-- hands -->
<path transform="translate(624,8.5)" d="M205.09,526.59 C202.01,526.40 203.16,528.13 198.92,531.21 C194.68,534.30 192.95,535.07 188.13,538.92 C183.31,542.78 182.93,543.55 179.65,546.63 C176.37,549.72 176.85,549.33 175.02,551.26 C173.19,553.19 173.19,552.42 172.32,554.34 C171.46,556.27 172.23,554.92 171.55,558.97 C170.88,563.02 170.01,566.68 169.63,570.54 C169.24,574.39 169.24,573.62 170.01,574.39 C170.78,575.16 171.55,574.39 172.71,573.62 C173.87,572.85 174.06,571.11 174.64,571.31 C175.22,571.50 174.35,573.43 175.02,574.39 C175.70,575.35 176.47,576.13 177.34,575.16 C178.20,574.20 178.30,572.85 178.49,570.54 C178.69,568.22 177.43,567.07 178.11,565.91 C178.78,564.75 179.75,566.10 181.19,565.91 C182.64,565.72 183.31,566.10 183.89,565.14 C184.47,564.18 184.85,563.40 183.50,562.05 C182.15,560.71 179.46,561.09 178.49,559.74 C177.53,558.39 178.20,558.01 179.65,556.66 C181.09,555.31 181.58,555.12 184.28,554.34 C186.97,553.57 188.13,553.19 190.44,553.57 C192.76,553.96 192.95,554.15 193.53,555.89 C194.11,557.62 193.91,557.24 192.76,560.51 C191.60,563.79 189.67,565.91 188.90,568.99 C188.13,572.08 188.90,571.69 189.67,572.85 C190.44,574.01 190.44,575.16 191.99,573.62 C193.53,572.08 193.91,570.34 195.84,566.68 C197.77,563.02 196.61,564.37 199.70,558.97 C202.78,553.57 205.29,549.53 208.18,545.09 C211.07,540.66 209.43,543.16 211.26,541.24 C213.09,539.31 215.50,539.70 215.50,537.38 C215.50,535.07 213.86,534.68 211.26,531.99 C208.66,529.29 208.18,526.78 205.09,526.59 Z" fill="#f6bb98" stroke="#b0605a" stroke-width="1.2"/>
<path transform="translate(613,14)" d="M509.91,526.59 C512.99,526.40 511.84,528.13 516.08,531.21 C520.32,534.30 522.05,535.07 526.87,538.92 C531.69,542.78 532.07,543.55 535.35,546.63 C538.63,549.72 538.15,549.33 539.98,551.26 C541.81,553.19 541.81,552.42 542.68,554.34 C543.54,556.27 542.77,554.92 543.45,558.97 C544.12,563.02 544.99,566.68 545.37,570.54 C545.76,574.39 545.76,573.62 544.99,574.39 C544.22,575.16 543.45,574.39 542.29,573.62 C541.13,572.85 540.94,571.11 540.36,571.31 C539.78,571.50 540.65,573.43 539.98,574.39 C539.30,575.35 538.53,576.13 537.66,575.16 C536.80,574.20 536.70,572.85 536.51,570.54 C536.31,568.22 537.57,567.07 536.89,565.91 C536.22,564.75 535.25,566.10 533.81,565.91 C532.36,565.72 531.69,566.10 531.11,565.14 C530.53,564.18 530.15,563.40 531.50,562.05 C532.85,560.71 535.54,561.09 536.51,559.74 C537.47,558.39 536.80,558.01 535.35,556.66 C533.91,555.31 533.42,555.12 530.72,554.34 C528.03,553.57 526.87,553.19 524.56,553.57 C522.24,553.96 522.05,554.15 521.47,555.89 C520.89,557.62 521.09,557.24 522.24,560.51 C523.40,563.79 525.33,565.91 526.10,568.99 C526.87,572.08 526.10,571.69 525.33,572.85 C524.56,574.01 524.56,575.16 523.01,573.62 C521.47,572.08 521.09,570.34 519.16,566.68 C517.23,563.02 518.39,564.37 515.30,558.97 C512.22,553.57 509.71,549.53 506.82,545.09 C503.93,540.66 505.57,543.16 503.74,541.24 C501.91,539.31 499.50,539.70 499.50,537.38 C499.50,535.07 501.14,534.68 503.74,531.99 C506.34,529.29 506.82,526.78 509.91,526.59 Z" fill="#f6bb98" stroke="#b0605a" stroke-width="1.2"/>
<!-- neck -->
<path d="M963.6,390 L984.1,390 L984.1,421 L963.6,421 Z" fill="#e6ad8b"/>
<path d="M984.1,392 L984.1,412" fill="none" stroke="#c07868" stroke-width="0.9"/>
<!-- shirt -->
<path d="M955.2,418 L986.2,413 L968.7,458 L961.3,473.5 Z" fill="#e9ecec"/>
<path d="M957.6,418 L961.3,413.3 L967.7,421.65 L984.4,410.55 L986.2,414.25 L976.1,430.9 L969,424.5 L962.2,431.8 Z" fill="#e9ecec" stroke="#a9b8c0" stroke-width="0.8"/>
<!-- tie -->
<path d="M966.5,432.5 L970,432.5 L970.5,450 L968,462 L961.3,473.5 L959.8,462 L963,448 Z" fill="#5b5b5f" stroke="#3a3a3e" stroke-width="0.6"/>
<path d="M965,425 L968.3,422.3 L971.4,425 L970,432.8 L966.2,432.8 Z" fill="#5b5b5f" stroke="#3a3a3e" stroke-width="0.6"/>
<!-- lapels -->
<path d="M953.9,418 L945.5,422.6 C942,430 940.5,435 940,439.2 L949.2,447.6 L942.3,449.4 C946,460 952,472 957.6,480 L961.3,473.5 C959,455 957,435 955.2,419.8 Z" fill="#91a3ae" stroke="#56636d" stroke-width="1"/>
<path d="M986.2,415.2 L994.6,418 C995.5,425 995.2,430 994.6,436.5 L982.5,444.8 L990,445.7 C980,458 968,472 958.5,481.8 L961.3,473.5 C964,468 966,462 968.7,456.8 C975,440 980,428 986.2,415.2 Z" fill="#91a3ae" stroke="#56636d" stroke-width="1"/>
<path d="M958.5,481.8 C959,510 959,540 959.1,568.8" fill="none" stroke="#56636d" stroke-width="1"/>
<g fill="#5d5f63" stroke="#333" stroke-width="0.7">
<circle cx="964.7" cy="492" r="3.1"/><circle cx="964.7" cy="526.5" r="3.1"/><circle cx="964.7" cy="562.3" r="3.1"/>
</g>
<rect x="986.3" y="468.8" width="21.2" height="4.2" rx="1" fill="#91a3ae" stroke="#56636d" stroke-width="1"/>
<!-- back hair -->
<path d="M988,300 L1018.6,300 L1018.6,325 L1017.9,337 L1012,352 L1006.4,367.7 C1003,372 999,376 995.7,378.4 L990,365 L988,360 Z" fill="#636367" stroke="#2e2e32" stroke-width="1"/>
<ellipse cx="918.2" cy="347" rx="2.3" ry="6.5" fill="#efb190" stroke="#c07868" stroke-width="0.8"/>
<!-- face -->
<path d="M919,290 L918.4,325 C917.5,335 917,342 917.3,345.6 C918,355 919.5,362 920.4,368.2 C922,376 923.5,383 925.55,388.7 C929,397 933,405 937.9,410.3 C940,412.5 943,413.4 946.1,413.4 C950,413.4 954,412.5 958.4,411.3 C965,407 971,403 976.9,399 C981,395 985,392.5 987.7,390 C991,385 995,375 997.7,367.7 L996,364 C994.5,358 993.5,350 993.4,345.6 L992.35,290 Z" fill="#f7bb98" stroke="#c07868" stroke-width="1"/>
<!-- hair -->
<path d="M916.85,327.2 C913,318 909.7,308 909.65,300.1 C909.6,290 912,281 918.5,274.7 L922.8,271.3 L923.5,274.5 C926,274 929,274.5 931.2,275.5 C934,271.5 938,269.5 940.5,268.8 C945,266.5 949,265.8 953.2,265.4 C951.5,267.5 950.7,269.5 950.7,271.3 C955,269.5 959,268.3 964.2,267.9 C970,267.5 975,267.8 981.2,268.3 C987,269.5 992,271.5 998.1,273.8 C1006,276.5 1013,278.5 1020.1,280.2 C1016,282 1013,283.5 1010.8,284.9 C1014,287 1017,289.5 1019.3,292.5 C1022.5,297 1025,302 1026.5,308.1 C1018,307 1011,306 1004.9,305.6 C1010,308 1014,311 1016.7,314.5 C1018,320 1018.5,325 1018.4,329.7 L1018,336 L992.5,336 L992.2,317 L1001.9,320.4 C997,317.5 994,316 990.5,314.5 C985,312 979,310 972.7,308.5 C968,307.5 963,306 959.2,305.2 L960.9,311.5 C960,310.5 959.5,309.8 959.2,309.4 C954,307 948,305.5 943.1,304.3 C938,302.5 933,301 927.85,300.1 C923,309 920,318 917.7,327.2 Z" fill="#636367"/>
<path d="M916.85,327.2 C913,318 909.7,308 909.65,300.1 C909.6,290 912,281 918.5,274.7 L922.8,271.3 L923.5,274.5 C926,274 929,274.5 931.2,275.5 C934,271.5 938,269.5 940.5,268.8 C945,266.5 949,265.8 953.2,265.4 C951.5,267.5 950.7,269.5 950.7,271.3 C955,269.5 959,268.3 964.2,267.9 C970,267.5 975,267.8 981.2,268.3 C987,269.5 992,271.5 998.1,273.8 C1006,276.5 1013,278.5 1020.1,280.2 C1016,282 1013,283.5 1010.8,284.9 C1014,287 1017,289.5 1019.3,292.5 C1022.5,297 1025,302 1026.5,308.1 C1018,307 1011,306 1004.9,305.6 C1010,308 1014,311 1016.7,314.5 C1018,320 1018.5,325 1018.4,329.7 L1018,336 M992.2,317 L1001.9,320.4 C997,317.5 994,316 990.5,314.5 C985,312 979,310 972.7,308.5 C968,307.5 963,306 959.2,305.2 L960.9,311.5 C960,310.5 959.5,309.8 959.2,309.4 C954,307 948,305.5 943.1,304.3 C938,302.5 933,301 927.85,300.1 C923,309 920,318 917.7,327.2" fill="none" stroke="#2e2e32" stroke-width="1.1"/>
<g fill="none" stroke="#2e2e32" stroke-width="1.05">
<path d="M927.85,300.1 C923,298.5 919,296 918,292 C917,287 916.9,281 917.7,277.2 C920,275.5 923,275.3 926.2,275.5 C931,276.5 935,278 938.9,280.6 C944,285 949,290 952.4,295.9 C956,301 958.5,306 960.9,311.5"/>
<path d="M940.5,279.8 C942,276.5 944,274.5 947.3,273.8 C953,273.5 958,275 964.2,277.2 C970,280 976,284.5 981.2,289.9 C989,298 996,309 1001.9,320.4"/>
</g>
<g fill="none" stroke="#8e8e92" stroke-width="0.9">
<path d="M925,279 C935,280 945,287 951,296"/>
<path d="M950,279 C962,280 975,287 985,300"/>
<path d="M990,276 C1002,280 1012,289 1018,300"/>
<path d="M912,305 C912,295 914,285 918,279"/>
</g>
<!-- ear -->
<path d="M996.3,335 C999,331.5 1003,330.5 1006.4,330.7 C1012,331 1017,336 1018.4,343.7 C1019,349 1016,354 1013,358.4 C1010,363 1006,367 1001.7,367.7 C998.5,368 996,366 994.3,362.4 L993.2,350 Z" fill="#f7bb98"/>
<path d="M996.3,335 C999,331.5 1003,330.5 1006.4,330.7 C1012,331 1017,336 1018.4,343.7 C1019,349 1016,354 1013,358.4 C1010,363 1006,367 1001.7,367.7 C998.5,368 996,366 994.3,362.4" fill="none" stroke="#c07868" stroke-width="1"/>
<path d="M998.5,345 C1000,338 1007,335 1014,337.5 C1009,338.5 1005,341 1003,348 C1002,352 1001,353 1000.5,353 C999,351 998.3,348 998.5,345 Z" fill="#c99a7e"/>
<!-- eyebrows -->
<path d="M928.7,328.9 C930,322 935,316 940.5,314.5 C943,314.5 945,318 945.6,322.1 C942,322 939.5,322.3 937.2,322.9 C934,324 931,326.5 928.7,328.9 Z" fill="#636367" stroke="#3c3c40" stroke-width="0.8"/>
<path d="M954.5,322.1 C955,318 957,314.5 959.2,314.5 C966,315 973,320 976.1,328 C975.5,328.8 975,329 974.5,329 C971,325 967,322 964.2,321.25 C961,320.8 957.5,321.3 954.5,322.1 Z" fill="#636367" stroke="#3c3c40" stroke-width="0.8"/>
<!-- nose -->
<path d="M945,335 C948,342 951,352 952.3,360.45 C954.5,361.5 955.5,363 955.35,364.5 C955,366.5 954,367.5 953.3,368.2 C951,369.5 947,370.7 943,370.7 C940,370.7 936,370 933.8,368.2 C932.5,367 932,365.5 932.7,363 C934,360 937,357.5 939.9,354.8 C942,352 944,349 944.6,345.6 Z" fill="#f1b491"/>
<path d="M943.5,327 C944.5,333 945,340 944.6,345.6 C943,350 941,352.5 939.9,354.8 C937,357.5 934,360 932.7,363 C932,365.5 932.5,367 933.8,368.2 C936,370 940,370.7 943,370.7 C947,370.7 951,369.5 953.3,368.2 C955,366.5 955.5,365 955.35,364 C955,362 954,361 952.3,360.45" fill="none" stroke="#c98272" stroke-width="1"/>
<!-- eyes -->
<g stroke="#4a4a4e" stroke-width="1.3" fill="#fff">
<circle cx="935.8" cy="340.9" r="7.8"/><circle cx="964.1" cy="340.9" r="8.7"/>
</g>
<circle cx="935.3" cy="340.4" r="3.9" fill="#16161a"/><circle cx="963" cy="340.4" r="4.1" fill="#16161a"/>
<!-- mouth -->
<path d="M937.9,380.5 C942,382.3 946,383 950.2,383 C954,383 958,382.3 962,380.5" fill="none" stroke="#5e4a46" stroke-width="1.6"/>
</g>

<!-- stage mode -->
<rect x="63.5" y="857.5" width="178" height="34" rx="5" fill="#8a8a8a" stroke="#666" stroke-width="1"/>
<!-- timeline -->
<rect x="75" y="918" width="1182" height="1" fill="#a8a8a8"/>
<circle cx="75" cy="918.5" r="6.5" fill="#f5f5f5" stroke="#999" stroke-width="2"/>
<path d="M74.5 930 L74.5 939 L65 939 Z" fill="#dd3a12"/>
<path d="M1251 930 L1251 939 L1261 939 Z" fill="#dd3a12"/>
<!-- right panel -->
<rect x="1283" y="149" width="253" height="798" fill="#c3c3c3"/>
<rect x="1287" y="173.5" width="249" height="769.5" fill="#f5f5f5"/>
<rect x="1302" y="188.5" width="240" height="28" fill="#f5f5f5" stroke="#a0a0a0" stroke-width="1"/>
<rect x="1302" y="227.5" width="240" height="700" fill="#f5f5f5" stroke="#a0a0a0" stroke-width="1"/>
<rect x="1302.5" y="228" width="234" height="25" fill="#fff"/>
<rect x="1302.5" y="302.5" width="234" height="23" fill="#c3c3c3"/>
<rect x="1283" y="947" width="118" height="26" fill="#fff"/>
<rect x="1283" y="947" width="1.5" height="26" fill="#a8a8a8"/>
<rect x="1401" y="947" width="118" height="26" fill="#e5390e"/>
<g id="panel">
<circle cx="1310.4" cy="201.1" r="4.4" fill="none" stroke="#444" stroke-width="1.3"/>
<path d="M1313.6,204.4 L1318.1,208.6" stroke="#444" stroke-width="1.5" stroke-linecap="round"/>
<rect x="1350" y="228" width="1" height="25" fill="#ececec"/>
<rect x="1398.5" y="228" width="1" height="25" fill="#ececec"/>
<g fill="#f7f7f7" stroke="#8c8c8c" stroke-width="1.2">
<rect x="1312.6" y="258.5" width="14.8" height="14"/><rect x="1360.9" y="258.5" width="14.6" height="14"/>
<rect x="1312.6" y="282.7" width="14.8" height="14"/><rect x="1360.9" y="282.7" width="14.6" height="14"/>
<rect x="1312.6" y="306.7" width="14.8" height="14"/><rect x="1360.9" y="306.7" width="14.6" height="14"/>
</g>
<g fill="none" stroke="#e8401a" stroke-width="2" stroke-linecap="round" stroke-linejoin="round">
<path d="M1314,265.3 L1317.5,270.2 L1325.8,261.6"/>
<path d="M1314,289.5 L1317.5,294.4 L1325.8,285.8"/>
<path d="M1314,313.5 L1317.5,318.4 L1325.8,309.8"/>
</g>
<path d="M1403.4,261.3 L1419,261.3 L1411.2,271.6 Z" fill="#8e8e8e"/>
<rect x="1426" y="270.6" width="43.5" height="1.1" fill="#333"/>
<rect x="1450.2" y="294.6" width="37.6" height="1.1" fill="#333"/>
<rect x="1450.2" y="318.6" width="37" height="1.1" fill="#f2f2f2"/>
</g>

<g id="bottom" fill="none" stroke-linejoin="round">
<!-- speech bubble -->
<path d="M362.3,951.3 L376.4,951.3 L376.4,960.8 L372,960.8 L369.5,963.3 L367,960.8 L362.3,960.8 Z" stroke="#444" stroke-width="1.2"/>
<g fill="#444"><circle cx="366" cy="956" r="0.9"/><circle cx="369.4" cy="956" r="0.9"/><circle cx="372.8" cy="956" r="0.9"/></g>
<path d="M384,958 L418,958" stroke="#b8b8b8" stroke-width="1.3"/>
<circle cx="423.6" cy="957.5" r="5.2" fill="#f5f5f5" stroke="#9a9a9a" stroke-width="1.4"/>
<!-- play -->
<path d="M498.3,952.2 L508,958 L498.3,963.7 Z" stroke="#333" stroke-width="1.3"/>
<rect x="526.4" y="952.4" width="11.5" height="11.2" stroke="#333" stroke-width="1.3"/>
<!-- prev key -->
<path d="M556,952 L556,963.6 M566.6,952.3 L557.5,958 L566.6,963.6 Z" stroke="#333" stroke-width="1.3"/>
<!-- rewind -->
<path d="M596,952 L596,963.6 L590,958 L590,963.6 L583.5,958 L590,952 L590,958 Z" stroke="#333" stroke-width="1.3"/>
<!-- fast fwd -->
<path d="M612,952 L612,963.6 L618.3,958 L618.3,963.6 L625,958 L618.3,952 L618.3,958 Z" stroke="#333" stroke-width="1.3"/>
<!-- next key -->
<path d="M653.4,952 L653.4,963.6 M642.6,952.3 L651.8,958 L642.6,963.6 Z" stroke="#333" stroke-width="1.3"/>
<!-- loop -->
<path d="M682.5,956 L682.5,953 L669.8,953 L669.8,962.7 L680,962.7" stroke="#333" stroke-width="1.3"/>
<path d="M680,960 L684.3,962.7 L680,965.3 Z" fill="#222"/>
<!-- frame box -->
<rect x="694.5" y="946.6" width="76" height="22.6" fill="#f7f7f7" stroke="#9a9a9a" stroke-width="1"/>
<path d="M756.5,946.6 L756.5,969.2 M756.5,958 L770.5,958" stroke="#c8c8c8" stroke-width="1"/>
<path d="M761.2,954.3 L765.8,954.3 L763.5,950.6 Z" fill="#c0c0c0"/>
<path d="M761.2,961.5 L765.8,961.5 L763.5,965.2 Z" fill="#d8d8d8"/>
<!-- gear -->
<circle cx="787.9" cy="958.1" r="5" stroke="#333" stroke-width="1.3"/>
<path d="M787.9,950 L787.9,952 M787.9,964.2 L787.9,966.2 M779.8,958.1 L781.8,958.1 M794,958.1 L796,958.1 M782.2,952.4 L783.6,953.8 M792.2,962.4 L793.6,963.8 M782.2,963.8 L783.6,962.4 M792.2,953.8 L793.6,952.4" stroke="#333" stroke-width="1.3"/>
<!-- panel icon -->
<rect x="809" y="952" width="15.4" height="11.6" stroke="#333" stroke-width="1.3"/>
<path d="M809,957.8 L824.4,957.8 M811.5,954.8 L822,954.8 M816.5,960.8 L822,960.8" stroke="#333" stroke-width="1.2"/>
<!-- note -->
<path d="M879.5,950.8 L879.5,962" stroke="#555" stroke-width="1.3"/>
<ellipse cx="876.6" cy="962.3" rx="3" ry="2" fill="#555" transform="rotate(-20 876.6 962.3)"/>
<path d="M891.4,958 L925.5,958" stroke="#b8b8b8" stroke-width="1.3"/>
<circle cx="930.7" cy="957.8" r="5.2" fill="#f5f5f5" stroke="#9a9a9a" stroke-width="1.4"/>
</g>

</svg>
<div class="a" style="left:27px;top:3px;font-size:14.5px;color:#8c8c8c">Cartoon Animator 5 - DefProject.ctProject *</div>
<div class="a" style="left:8px;top:30px;font-size:12px;color:#1e1e1e">File</div>
<div class="a" style="left:42px;top:30px;font-size:12px;color:#1e1e1e">Edit</div>
<div class="a" style="left:78px;top:30px;font-size:12px;color:#1e1e1e">Create</div>
<div class="a" style="left:129px;top:30px;font-size:12px;color:#1e1e1e">Animation</div>
<div class="a" style="left:198px;top:30px;font-size:12px;color:#1e1e1e">Control</div>
<div class="a" style="left:252px;top:30px;font-size:12px;color:#1e1e1e">Render</div>
<div class="a" style="left:306px;top:30px;font-size:12px;color:#1e1e1e">View</div>
<div class="a" style="left:347px;top:30px;font-size:12px;color:#1e1e1e">Window</div>
<div class="a" style="left:405px;top:30px;font-size:12px;color:#1e1e1e">Plugins</div>
<div class="a" style="left:461px;top:30px;font-size:12px;color:#1e1e1e">Help</div>
<div class="a" style="left:55px;top:162px;font:16px 'Liberation Mono',monospace;color:#222">FPS: 0.00, AVG: 0.00</div>
<div class="a" style="left:94px;top:866px;font-size:19px;color:#fff;letter-spacing:-0.9px">STAGE MODE</div>
<div class="a" style="left:597px;top:65px;font-size:11.3px;color:#cbcbcb">Opacity :</div>
<div class="a" style="left:651.5px;top:65.5px;font-size:12px;color:#c8c8c8">100</div>
<div class="a" style="left:1031.5px;top:66.5px;font-size:11.5px;color:#444">SVG :</div>
<div class="a" style="left:1112.5px;top:66.5px;font-size:11.5px;color:#444">PSD :</div>
<div class="a" style="left:55px;top:118px;font-size:12px;color:#cfcfcf">X</div>
<div class="a" style="left:72.5px;top:118px;font-size:12px;color:#cfcfcf">0.0</div>
<div class="a" style="left:141.5px;top:118px;font-size:12px;color:#cfcfcf">Y</div>
<div class="a" style="left:159px;top:118px;font-size:12px;color:#cfcfcf">0.0</div>
<div class="a" style="left:229px;top:118px;font-size:12px;color:#cfcfcf">Z</div>
<div class="a" style="left:246px;top:118px;font-size:12px;color:#cfcfcf">0.0</div>
<div class="a" style="left:314.5px;top:118px;font-size:12px;color:#cfcfcf">W</div>
<div class="a" style="left:336px;top:118px;font-size:12px;color:#cfcfcf">0.0</div>
<div class="a" style="left:428.5px;top:118px;font-size:12px;color:#cfcfcf">H</div>
<div class="a" style="left:447px;top:118px;font-size:12px;color:#cfcfcf">0.0</div>
<div class="a" style="left:518.5px;top:118px;font-size:12px;color:#cfcfcf">R</div>
<div class="a" style="left:537px;top:118px;font-size:12px;color:#cfcfcf">0</div>
<div class="a" style="left:1307.3px;top:235px;font-size:12px;color:#333">Show</div>
<div class="a" style="left:1355.7px;top:235px;font-size:12px;color:#333">Lock</div>
<div class="a" style="left:1403.7px;top:235px;font-size:12px;color:#333">Name</div>
<div class="a" style="left:1426px;top:261px;font-size:11px;color:#333;letter-spacing:-0.1px">G3 Actor</div>
<div class="a" style="left:1450.2px;top:285px;font-size:11.5px;color:#333">Tom_S</div>
<div class="a" style="left:1450.2px;top:309px;font-size:11.5px;color:#f4f4f4">Tom_F</div>
<div class="a" style="left:1321px;top:957.5px;font-size:11.7px;font-weight:bold;color:#333">Content</div>
<div class="a" style="left:1443.7px;top:958.5px;font-size:11.7px;font-weight:bold;color:#fff">Scene</div>
<div class="a" style="left:698px;top:953px;font-size:11px;color:#2a3550">0</div>
</body></html>
